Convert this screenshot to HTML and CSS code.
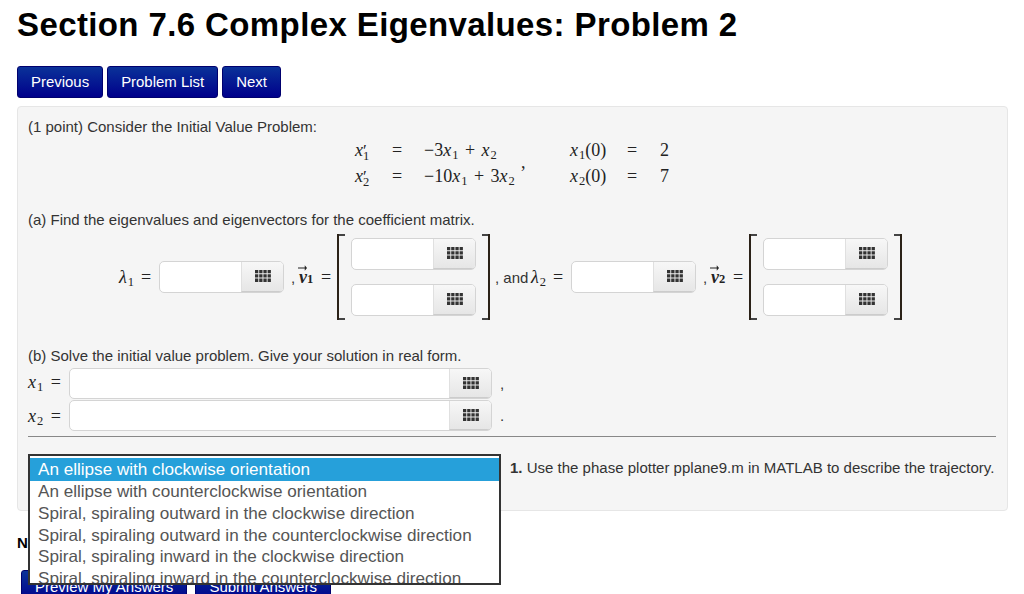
FILE: index.html
```html
<!DOCTYPE html>
<html lang="en">
<head>
<meta charset="utf-8">
<title>Section 7.6 Complex Eigenvalues: Problem 2</title>
<link rel="stylesheet" href="styles.css">
</head>
<body>
<svg class="defs" width="0" height="0" aria-hidden="true">
  <symbol id="grid" viewBox="0 0 16 12">
    <path d="M0 0h3.300v3.300H0zM4.200 0h3.300v3.300H4.200zM8.400 0h3.300v3.300H8.400zM12.600 0h3.300v3.300h-3.300zM0 4.300h3.300v3.300H0zM4.200 4.300h3.300v3.300H4.200zM8.400 4.300h3.300v3.300H8.400zM12.600 4.300h3.300v3.300h-3.300zM0 8.600h3.300v3.300H0zM4.200 8.600h3.300v3.300H4.200zM8.400 8.600h3.300v3.300H8.400zM12.600 8.600h3.300v3.300h-3.300z"/>
  </symbol>
</svg>

<h1 class="title">Section 7.6 Complex Eigenvalues: Problem 2</h1>

<nav class="nav">
  <a class="btn">Previous</a>
  <a class="btn">Problem List</a>
  <a class="btn">Next</a>
</nav>

<main class="well">
  <p class="line">(1 point) Consider the Initial Value Problem:</p>

  <div class="system">
    <div class="eqs eqs-a">
      <span class="m"><i>x</i><span class="subsup"><span class="prime">′</span><span class="sb">1</span></span></span><span class="m">=</span><span class="m">−3<i>x</i><sub>1</sub> + <i>x</i><sub>2</sub></span>
      <span class="m"><i>x</i><span class="subsup"><span class="prime">′</span><span class="sb">2</span></span></span><span class="m">=</span><span class="m">−10<i>x</i><sub>1</sub> + 3<i>x</i><sub>2</sub></span>
    </div>
    <span class="m sys-comma">,</span>
    <div class="eqs eqs-b">
      <span class="m"><i>x</i><sub>1</sub>(0)</span><span class="m">=</span><span class="m">2</span>
      <span class="m"><i>x</i><sub>2</sub>(0)</span><span class="m">=</span><span class="m">7</span>
    </div>
  </div>

  <p class="line part-a">(a) Find the eigenvalues and eigenvectors for the coefficient matrix.</p>

  <div class="vec-row">
    <span class="m lam"><i>λ</i><sub>1</sub></span><span class="m eq">=</span>
    <div class="ig"><span class="ig-field"></span><span class="ig-add"><svg class="ico"><use href="#grid"/></svg></span></div>
    <span class="sep">,</span>
    <span class="m vec"><b class="v"><svg class="arrow" viewBox="0 0 10 6"><path d="M0 2.400h7.500V0L10 3 7.500 6V3.600H0z"/></svg>v</b><sub class="bsub">1</sub></span><span class="m eq eq-vec">=</span>
    <div class="matrix">
      <div class="ig"><span class="ig-field"></span><span class="ig-add"><svg class="ico"><use href="#grid"/></svg></span></div>
      <div class="ig"><span class="ig-field"></span><span class="ig-add"><svg class="ico"><use href="#grid"/></svg></span></div>
    </div>
    <span class="sep-and">, and</span>
    <span class="m lam"><i>λ</i><sub>2</sub></span><span class="m eq">=</span>
    <div class="ig"><span class="ig-field"></span><span class="ig-add"><svg class="ico"><use href="#grid"/></svg></span></div>
    <span class="sep">,</span>
    <span class="m vec"><b class="v"><svg class="arrow" viewBox="0 0 10 6"><path d="M0 2.400h7.500V0L10 3 7.500 6V3.600H0z"/></svg>v</b><sub class="bsub">2</sub></span><span class="m eq eq-vec">=</span>
    <div class="matrix">
      <div class="ig"><span class="ig-field"></span><span class="ig-add"><svg class="ico"><use href="#grid"/></svg></span></div>
      <div class="ig"><span class="ig-field"></span><span class="ig-add"><svg class="ico"><use href="#grid"/></svg></span></div>
    </div>
  </div>

  <p class="line part-b">(b) Solve the initial value problem. Give your solution in real form.</p>

  <div class="sol sol-first">
    <span class="m sol-label"><i>x</i><sub>1</sub> <span class="sol-eq">=</span></span>
    <div class="ig ig-wide"><span class="ig-field"></span><span class="ig-add"><svg class="ico"><use href="#grid"/></svg></span></div>
    <span class="sol-end">,</span>
  </div>
  <div class="sol sol-second">
    <span class="m sol-label"><i>x</i><sub>2</sub> <span class="sol-eq">=</span></span>
    <div class="ig ig-wide"><span class="ig-field"></span><span class="ig-add"><svg class="ico"><use href="#grid"/></svg></span></div>
    <span class="sol-end">.</span>
  </div>

  <hr class="rule">

  <div class="traj">
    <div class="select-wrap">
      <ul class="dropdown">
        <li class="opt opt-on">An ellipse with clockwise orientation</li>
        <li class="opt">An ellipse with counterclockwise orientation</li>
        <li class="opt">Spiral, spiraling outward in the clockwise direction</li>
        <li class="opt">Spiral, spiraling outward in the counterclockwise direction</li>
        <li class="opt">Spiral, spiraling inward in the clockwise direction</li>
        <li class="opt">Spiral, spiraling inward in the counterclockwise direction</li>
      </ul>
    </div>
    <p class="line traj-text"><b>1.</b> Use the phase plotter pplane9.m in MATLAB to describe the trajectory.</p>
  </div>
</main>

<p class="note"><b>Note:</b></p>

<div class="actions">
  <a class="btn btn-big">Preview My Answers</a>
  <a class="btn btn-big">Submit Answers</a>
</div>
</body>
</html>
```

FILE: styles.css
```css
html, body {
  margin: 0;
  height: 594px;
  overflow: hidden;
  background: #fff;
}
body {
  padding-left: 17px;
  width: 1024px;
  box-sizing: border-box;
  font-family: "Liberation Sans", Arial, sans-serif;
  font-size: 15px;
  color: #333;
}
.defs { position: absolute; }
.title {
  margin: 5px 0 0;
  font-size: 33px;
  line-height: 40px;
  font-weight: 700;
  color: #000;
  letter-spacing: 0.39px;
}
.nav {
  display: flex;
  gap: 4px;
  margin-top: 21px;
}
.btn {
  display: flex;
  align-items: center;
  height: 32px;
  box-sizing: border-box;
  padding: 0 13px 2px;
  color: #fff;
  font-size: 14.95px;
  background: linear-gradient(#0a3299, #00008b);
  border: 1px solid #00006e;
  border-radius: 3px;
}
.well {
  position: relative;
  width: 991px;
  height: 405px;
  box-sizing: border-box;
  margin-top: 8px;
  padding: 10px 11px 0 10px;
  background: #f5f5f5;
  border: 1px solid #e6e6e6;
  border-radius: 4px;
}
.line {
  margin: 0;
  line-height: 20px;
}
.m {
  font-family: "Liberation Serif", "Times New Roman", serif;
  font-size: 18px;
  color: #222;
  word-spacing: 2px;
}
.m sub, .sb {
  font-size: 12.5px;
  font-style: normal;
  line-height: 0;
}
.m sub {
  vertical-align: -3px;
  margin-left: 1px;
}
.system {
  display: flex;
  margin-left: 327px;
}
.eqs {
  display: grid;
  grid-auto-rows: 26px;
  align-items: center;
}
.eqs-a { grid-template-columns: 37px 32px 91px; white-space: nowrap; }
.eqs-b { grid-template-columns: 57px 33px auto; margin-left: 44.500px; }
.sys-comma { align-self: center; margin-left: 6px; margin-top: -1px; }
.subsup {
  display: inline-flex;
  flex-direction: column;
  vertical-align: 0;
}
.prime { font-size: 17px; line-height: 8px; }
.sb { line-height: 9px; margin-top: -3px; }
.part-a { margin-top: 21px; }
.vec-row {
  display: flex;
  align-items: center;
  margin: 4px 0 0 91px;
  height: 86px;
}
.lam { width: 22px; flex: none; white-space: nowrap; }
.eq { width: 18px; flex: none; }
.eq-vec { width: 16px; }
.ig {
  display: flex;
  width: 125px;
  height: 32px;
  flex: none;
  box-sizing: border-box;
  border: 1px solid #d4d4d4;
  border-radius: 5px;
  overflow: hidden;
  background: #fff;
}
.ig-field { flex: 1; }
.ig-add {
  display: flex;
  align-items: center;
  justify-content: center;
  width: 42px;
  box-sizing: border-box;
  padding-bottom: 1px;
  border-left: 1px solid #e0e0e0;
  border-bottom: 1px solid #ccc;
  background: linear-gradient(#f7f7f7, #e6e6e6);
}
.ico { width: 16px; height: 12px; fill: #333; }
.sep { margin-left: 7px; width: 7px; flex: none; }
.sep-and { margin-left: 5px; width: 36px; flex: none; white-space: nowrap; }
.vec { display: inline-flex; align-items: baseline; width: 23px; flex: none; }
.v {
  position: relative;
  font-style: italic;
  font-size: 18px;
  margin-left: 1px;
}
.arrow {
  position: absolute;
  left: -1px;
  top: -2px;
  width: 9px;
  height: 6px;
  fill: #222;
}
.m .bsub { font-weight: 700; margin-left: 0; }
.matrix {
  display: flex;
  flex-direction: column;
  justify-content: space-between;
  width: 153px;
  height: 86px;
  flex: none;
  box-sizing: border-box;
  padding: 4px 12px;
  position: relative;
  border-left: 2px solid #2b2218;
  border-right: 2px solid #2b2218;
}
.matrix::before, .matrix::after {
  content: "";
  position: absolute;
  left: 0;
  right: 0;
  height: 2px;
  background: linear-gradient(90deg, #444 6px, transparent 6px, transparent calc(100% - 6px), #444 calc(100% - 6px));
}
.matrix::before { top: 0; }
.matrix::after { bottom: 0; }
.part-b { margin-top: 26px; }
.sol {
  display: flex;
  align-items: center;
  height: 31px;
  margin-top: 1px;
}
.part-b + .sol { margin-top: 2px; }
.sol-first .sol-label { padding-bottom: 2px; }
.sol-second .sol-label { padding-top: 1px; }
.sol-label { width: 41px; flex: none; white-space: nowrap; }
.sol-eq { margin-left: 1px; }
.ig-wide { width: 423px; height: 31px; }
.sol-end { margin-left: 8px; }
.rule {
  margin: 5px 0 0;
  height: 1px;
  border: 0;
  background: #888;
}
.traj {
  display: flex;
  margin-top: 21px;
}
.select-wrap {
  position: relative;
  width: 473px;
  flex: none;
}
.dropdown {
  position: absolute;
  left: 0;
  top: -4px;
  z-index: 2;
  width: 473px;
  height: 131px;
  box-sizing: border-box;
  margin: 0;
  padding: 2px 0 0;
  list-style: none;
  overflow: hidden;
  background: #fff;
  border: 2px solid #333;
  font-size: 17.13px;
  color: #555;
}
.opt {
  height: 21.8px;
  line-height: 21.8px;
  padding-left: 8px;
  white-space: nowrap;
}
.opt-on { height: 23px; line-height: 24px; background: #26a0da; color: #fff; }
.traj-text { margin-left: 9px; white-space: nowrap; font-size: 15.03px; }
.note { margin: 22px 0 0; line-height: 20px; color: #000; }
.actions {
  display: flex;
  gap: 8px;
  margin: 17px 0 0 4px;
}
.btn-big { font-size: 15px; padding-bottom: 0; }
```
